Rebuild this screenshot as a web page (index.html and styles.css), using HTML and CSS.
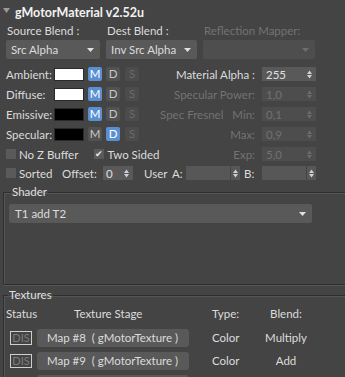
FILE: index.html
```html
<!DOCTYPE html>
<html lang="en">
<head>
    <meta charset="UTF-8">
    <title>gMotorMaterial</title>
    <link rel="stylesheet" href="styles.css">
</head>
<body>
    <div class="panel">
        <div class="rollout-title">
            <svg class="caret" width="7" height="5" viewBox="0 0 7 5"><path d="M0 0 L7 0 L3.5 5 Z"/></svg>
            <span>gMotorMaterial v2.52u</span>
        </div>

        <div class="blend-grid">
            <div class="lbl">Source Blend :</div>
            <div class="lbl">Dest Blend :</div>
            <div class="lbl off">Reflection Mapper:</div>
            <div class="combo">Src Alpha<svg class="arrow" width="7" height="4" viewBox="0 0 7 4"><path d="M0 0 L7 0 L3.5 4 Z"/></svg></div>
            <div class="combo">Inv Src Alpha<svg class="arrow" width="7" height="4" viewBox="0 0 7 4"><path d="M0 0 L7 0 L3.5 4 Z"/></svg></div>
            <div class="combo disabled"><svg class="arrow" width="7" height="4" viewBox="0 0 7 4"><path d="M0 0 L7 0 L3.5 4 Z"/></svg></div>
        </div>

        <div class="props">
            <div class="color-row">
                <span class="name">Ambient:</span>
                <span class="swatch white"></span>
                <span class="btn on">M</span><span class="btn">D</span><span class="btn dim">S</span>
            </div>
            <div class="spin-row">
                <span class="name">Material Alpha :</span>
                <span class="spin">255<svg class="updown" width="5" height="9" viewBox="0 0 5 9"><path d="M0 4 L2.5 0.5 L5 4 Z M0 5 L2.5 8.5 L5 5 Z"/></svg></span>
            </div>

            <div class="color-row">
                <span class="name">Diffuse:</span>
                <span class="swatch white"></span>
                <span class="btn on">M</span><span class="btn">D</span><span class="btn dim">S</span>
            </div>
            <div class="spin-row off">
                <span class="name">Specular Power:</span>
                <span class="spin">1,0<svg class="updown" width="5" height="9" viewBox="0 0 5 9"><path d="M0 4 L2.5 0.5 L5 4 Z M0 5 L2.5 8.5 L5 5 Z"/></svg></span>
            </div>

            <div class="color-row">
                <span class="name">Emissive:</span>
                <span class="swatch black"></span>
                <span class="btn on">M</span><span class="btn">D</span><span class="btn dim">S</span>
            </div>
            <div class="spin-row off">
                <span class="name">Spec Fresnel<span class="gap"></span>Min:</span>
                <span class="spin">0,1<svg class="updown" width="5" height="9" viewBox="0 0 5 9"><path d="M0 4 L2.5 0.5 L5 4 Z M0 5 L2.5 8.5 L5 5 Z"/></svg></span>
            </div>

            <div class="color-row">
                <span class="name">Specular:</span>
                <span class="swatch black"></span>
                <span class="btn">M</span><span class="btn on">D</span><span class="btn dim">S</span>
            </div>
            <div class="spin-row off">
                <span class="name">Max:</span>
                <span class="spin">0,9<svg class="updown" width="5" height="9" viewBox="0 0 5 9"><path d="M0 4 L2.5 0.5 L5 4 Z M0 5 L2.5 8.5 L5 5 Z"/></svg></span>
            </div>

            <div class="check-row">
                <span class="check-item"><span class="box"></span>No Z Buffer</span>
                <span class="check-item second"><span class="box">✔</span>Two Sided</span>
            </div>
            <div class="spin-row off">
                <span class="name">Exp:</span>
                <span class="spin">5,0<svg class="updown" width="5" height="9" viewBox="0 0 5 9"><path d="M0 4 L2.5 0.5 L5 4 Z M0 5 L2.5 8.5 L5 5 Z"/></svg></span>
            </div>

            <div class="sorted-row">
                <span class="check-item sorted"><span class="box"></span>Sorted</span>
                <span class="offset-lbl">Offset:</span>
                <span class="spin small">0<svg class="updown" width="5" height="9" viewBox="0 0 5 9"><path d="M0 4 L2.5 0.5 L5 4 Z M0 5 L2.5 8.5 L5 5 Z"/></svg></span>
                <span class="user-lbl">User</span>
                <span class="ab-lbl">A:</span>
                <span class="field"></span>
                <span class="field-arrows"><svg class="updown" width="5" height="9" viewBox="0 0 5 9"><path d="M0 4 L2.5 0.5 L5 4 Z M0 5 L2.5 8.5 L5 5 Z"/></svg></span>
                <span class="ab-lbl b">B:</span>
                <span class="field"></span>
                <span class="field-arrows"><svg class="updown" width="5" height="9" viewBox="0 0 5 9"><path d="M0 4 L2.5 0.5 L5 4 Z M0 5 L2.5 8.5 L5 5 Z"/></svg></span>
            </div>
        </div>

        <fieldset class="group shader">
            <legend>Shader</legend>
            <div class="combo wide">T1 add T2<svg class="arrow" width="7" height="4" viewBox="0 0 7 4"><path d="M0 0 L7 0 L3.5 4 Z"/></svg></div>
        </fieldset>

        <fieldset class="group textures">
            <legend>Textures</legend>
            <div class="tex-grid">
                <span class="th">Status</span>
                <span class="th stage">Texture Stage</span>
                <span class="th">Type:</span>
                <span class="th center">Blend:</span>

                <span class="dis">DIS</span>
                <span class="map">Map #8&nbsp; ( gMotorTexture )</span>
                <span class="cell">Color</span>
                <span class="cell center">Multiply</span>

                <span class="dis">DIS</span>
                <span class="map">Map #9&nbsp; ( gMotorTexture )</span>
                <span class="cell">Color</span>
                <span class="cell center">Add</span>

                <span class="dis"></span>
                <span class="map"></span>
                <span class="cell"></span>
                <span class="cell"></span>
            </div>
        </fieldset>
    </div>
</body>
</html>
```

FILE: styles.css
```css
* {
    margin: 0;
    padding: 0;
    box-sizing: border-box;
}

body {
    background: #444444;
    color: #dcdcdc;
    font-family: Lato, "Liberation Sans", sans-serif;
    font-size: 11.5px;
    overflow: hidden;
}

.panel {
    width: 345px;
    height: 377px;
    overflow: hidden;
}

/* rollout header */
.rollout-title {
    height: 23px;
    display: flex;
    align-items: center;
    padding: 2px 0 0 3px;
    font-size: 12.5px;
    font-weight: 700;
    color: #f2f2f2;
}

.caret {
    fill: #9a9a9a;
    margin: 0 5px 4px 0;
}

/* blend selectors */
.blend-grid {
    display: grid;
    grid-template-columns: 94px 91px 112px;
    column-gap: 6px;
    padding-left: 6px;
    row-gap: 2px;
}

.lbl {
    height: 15px;
    line-height: 15px;
    padding-left: 1px;
    white-space: nowrap;
}

.off,
.off .name {
    color: #737373;
}

.combo {
    height: 19px;
    background: #595959;
    border-radius: 2px;
    display: flex;
    align-items: center;
    justify-content: space-between;
    padding: 0 6px 0 5px;
    color: #dcdcdc;
    white-space: nowrap;
}

.combo .arrow {
    fill: #e0e0e0;
}

.combo.disabled {
    background: #4e4e4e;
    justify-content: flex-end;
}

.combo.disabled .arrow {
    fill: #6e6e6e;
}

/* material properties */
.props {
    display: grid;
    grid-template-columns: 150px 195px;
    grid-auto-rows: 20px;
    margin-top: 5px;
}

.color-row,
.check-row {
    display: flex;
    align-items: center;
    padding-left: 6px;
    white-space: nowrap;
}

.color-row .name {
    width: 48px;
}

.swatch {
    width: 30px;
    height: 13px;
    border: 1px solid #2a2a2a;
}

.swatch.white {
    background: #ffffff;
}

.swatch.black {
    background: #000000;
}

.btn {
    width: 14px;
    height: 14px;
    border-radius: 2px;
    background: #525252;
    color: #c8c8c8;
    font-size: 11.5px;
    line-height: 14px;
    text-align: center;
    margin-left: 4px;
}

.btn:first-of-type {
    margin-left: 6px;
}

.btn.on {
    background: #5a8fd2;
    color: #ffffff;
}

.btn.dim {
    color: #6a6a6a;
    background: #4c4c4c;
    margin-left: 5px;
}

.spin-row {
    display: flex;
    align-items: center;
    justify-content: flex-end;
    padding-right: 29px;
}

.spin-row .name {
    margin-right: 7px;
    white-space: nowrap;
}

.gap {
    display: inline-block;
    width: 9px;
}

.spin {
    width: 54px;
    height: 14px;
    background: #595959;
    display: flex;
    align-items: center;
    justify-content: space-between;
    padding: 0 4px 0 4px;
    color: #e0e0e0;
}

.updown {
    fill: #d0d0d0;
}

.spin-row.off .spin {
    background: #4d4d4d;
    color: #717171;
}

.spin-row.off .updown {
    fill: #6c6c6c;
}

.check-item {
    display: flex;
    align-items: center;
    white-space: nowrap;
}

.check-item.second {
    margin-left: 16px;
}

.box {
    width: 10px;
    height: 10px;
    background: #5a5a5a;
    margin-right: 3px;
    font-size: 9px;
    line-height: 10px;
    text-align: center;
    color: #e8e8e8;
}

.sorted-row {
    grid-column: 1 / -1;
    display: flex;
    align-items: center;
    padding-left: 6px;
    margin-top: -2px;
    white-space: nowrap;
}

.check-item.sorted {
    width: 56px;
}

.offset-lbl {
    width: 41px;
}

.spin.small {
    width: 30px;
    padding-left: 3px;
}

.user-lbl {
    margin-left: 11px;
    width: 28px;
}

.ab-lbl {
    width: 14px;
}

.ab-lbl.b {
    margin-left: 4px;
    width: 18px;
}

.field {
    width: 44px;
    height: 14px;
    background: #575757;
}

.field-arrows {
    width: 9px;
    height: 14px;
    margin-left: 1px;
    background: #575757;
    display: flex;
    align-items: center;
    justify-content: center;
}

/* group boxes */
.group {
    margin-left: 3px;
    width: 360px;
    border: 1px solid #2f2f2f;
    box-shadow: inset 1px 1px 0 #555555, 0 1px 0 #555555;
}

.group legend {
    margin-left: 2px;
    padding: 0 1px;
    line-height: 14px;
    color: #e0e0e0;
}

.shader {
    margin-top: 1px;
    height: 100px;
    padding: 5px 0 0 5px;
}

.combo.wide {
    width: 303px;
    padding-left: 6px;
}

.textures {
    margin-top: 3px;
    padding: 5px 0 0 2px;
}

.tex-grid {
    display: grid;
    grid-template-columns: 31px 175px 49px 50px;
    grid-template-rows: 19px 23px 23px 23px;
    align-items: center;
}

.th {
    align-self: start;
    white-space: nowrap;
}

.th.stage {
    padding-left: 37px;
}

.center {
    text-align: center;
}

.dis {
    width: 22px;
    height: 14px;
    margin-left: 4px;
    border: 1px solid #cfcfcf;
    color: #7c7c7c;
    font-size: 11px;
    line-height: 12px;
    text-align: center;
}

.map {
    width: 152px;
    height: 18px;
    border-radius: 3px;
    background: #595959;
    line-height: 18px;
    padding-left: 10px;
    color: #dcdcdc;
    white-space: nowrap;
}

.cell {
    white-space: nowrap;
}
```
